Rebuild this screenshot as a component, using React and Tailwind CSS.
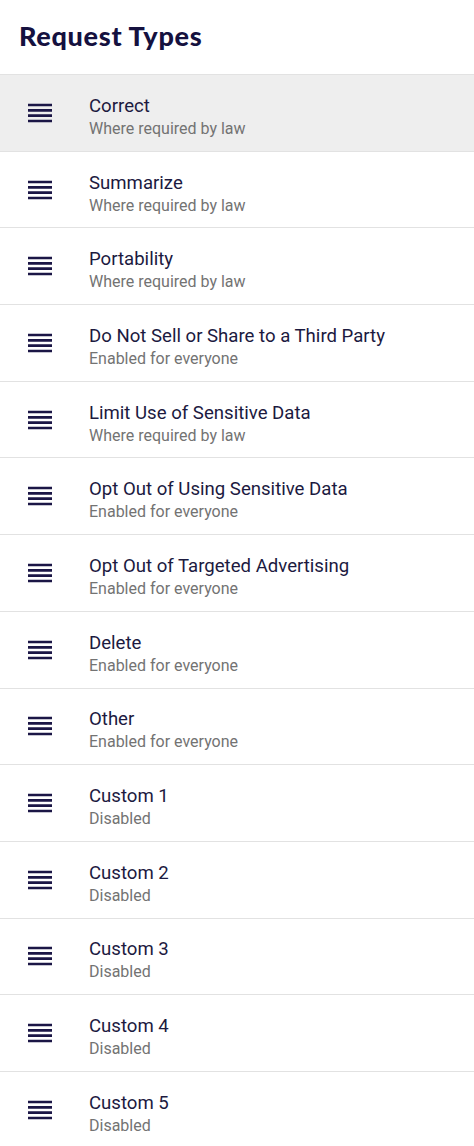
const ROWS = [
  { title: 'Correct', sub: 'Where required by law', active: true },
  { title: 'Summarize', sub: 'Where required by law' },
  { title: 'Portability', sub: 'Where required by law' },
  { title: 'Do Not Sell or Share to a Third Party', sub: 'Enabled for everyone' },
  { title: 'Limit Use of Sensitive Data', sub: 'Where required by law' },
  { title: 'Opt Out of Using Sensitive Data', sub: 'Enabled for everyone' },
  { title: 'Opt Out of Targeted Advertising', sub: 'Enabled for everyone' },
  { title: 'Delete', sub: 'Enabled for everyone' },
  { title: 'Other', sub: 'Enabled for everyone' },
  { title: 'Custom 1', sub: 'Disabled' },
  { title: 'Custom 2', sub: 'Disabled' },
  { title: 'Custom 3', sub: 'Disabled' },
  { title: 'Custom 4', sub: 'Disabled' },
  { title: 'Custom 5', sub: 'Disabled' },
]

function ReorderIcon() {
  return (
    <svg viewBox="0 0 24 24" className="w-8 h-8 flex-shrink-0" fill="#1b1646">
      <path d="M3 15h18v-2H3v2zm0 4h18v-2H3v2zm0-8h18V9H3v2zm0-6v2h18V5H3z" />
    </svg>
  )
}

function Row({ title, sub, active }) {
  return (
    <div className={`flex items-center h-[76.7px] border-b border-[#e2e2e2] pl-6 ${active ? 'bg-[#eeeeee]' : 'bg-white'}`}>
      <ReorderIcon />
      <div className="ml-[33px] mt-[8px] flex flex-col">
        <span className="text-[18.6px] leading-[24px] text-[#1c1a3f]">{title}</span>
        <span className="text-[16px] leading-[22px] text-[#737373]">{sub}</span>
      </div>
    </div>
  )
}

export default function App() {
  return (
    <div className="w-[474px] h-[1146px] overflow-hidden bg-white font-['Roboto',sans-serif]">
      <div className="h-[74px] flex items-center px-[19px] pb-[1px]">
        <h1 className="font-['Lato',sans-serif] font-black text-[27px] text-[#15113f] tracking-[0.7px]">Request Types</h1>
      </div>
      <div className="border-t border-[#e2e2e2]">
        {ROWS.map(r => <Row key={r.title} {...r} />)}
      </div>
    </div>
  )
}
